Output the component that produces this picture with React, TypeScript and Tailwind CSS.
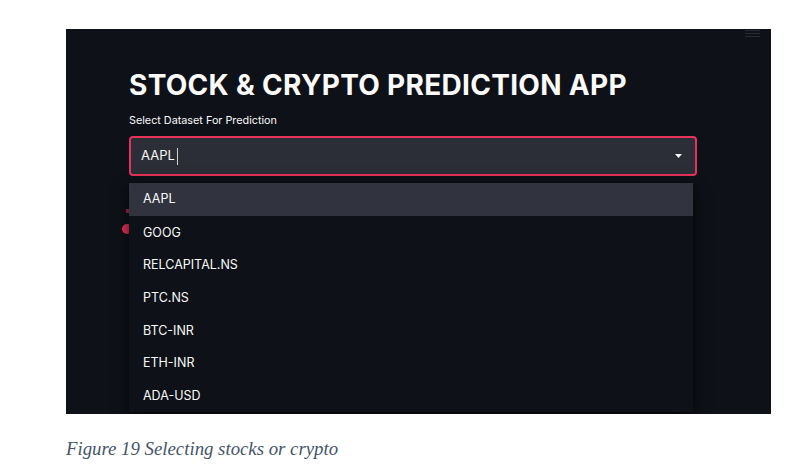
const options = ["AAPL", "GOOG", "RELCAPITAL.NS", "PTC.NS", "BTC-INR", "ETH-INR", "ADA-USD"];

export default function App() {
    return (
        <div className="w-[805px] h-[469px] bg-white overflow-hidden" style={{ fontFamily: "Inter, 'Open Sans', sans-serif" }}>
            <div className="pl-[66px] pt-[29px]">
                <div className="relative w-[705px] h-[385px] bg-[#0e1117] overflow-hidden">
                    {/* hamburger */}
                    <div className="absolute right-[11px] top-[1px] flex flex-col gap-[2px]">
                        <div className="w-[15px] h-[1px] bg-[#2a2c33]" />
                        <div className="w-[15px] h-[1px] bg-[#2a2c33]" />
                        <div className="w-[15px] h-[1px] bg-[#2a2c33]" />
                    </div>

                    <div className="pl-[63px] pr-[74px] pt-[38px] flex flex-col">
                        <h1 className="text-[28px] leading-[36px] font-bold text-[#fafafa] tracking-[0.3px]">
                            STOCK &amp; CRYPTO PREDICTION APP
                        </h1>
                        <div className="mt-[11px] text-[10.8px] leading-[14px] text-[#fafafa]">Select Dataset For Prediction</div>
                        <div className="mt-[8px] h-[40px] rounded-[4px] border-2 border-[#e8315b] bg-[#2b2d37] flex items-center pl-[10px] pr-[10px]">
                            <span className="text-[13px] text-[#fafafa]">AAPL</span>
                            <span className="ml-[2px] w-[1px] h-[17px] bg-[#d0d0d0]" />
                            <div className="flex-1" />
                            <svg width="9" height="6" viewBox="0 0 9 6" className="mr-[2px]">
                                <path d="M1 1 L8 1 L4.5 5 Z" fill="#fafafa" />
                            </svg>
                        </div>

                        {/* content behind the menu */}
                        <div className="relative mt-[7px] h-[240px]">
                            <div className="absolute left-[-3px] top-[26px] w-[3px] h-[4px] bg-[#e8315b] opacity-70" />
                            <div className="absolute left-[-7px] top-[41px] w-[10px] h-[10px] rounded-full bg-[#e8315b]" />

                            <div className="absolute left-0 top-0 w-[564px] bg-[#0e1117] shadow-[0_4px_14px_rgba(0,0,0,0.7)]">
                                {options.map((o, i) => (
                                    <div
                                        key={o}
                                        className={
                                            i === 0
                                                ? "h-[32.7px] flex items-center pl-[14px] pt-[1px] bg-[#31333f] text-[12.5px] text-[#fafafa]"
                                                : "h-[32.7px] flex items-center pl-[14px] pt-[2px] text-[12.5px] text-[#fafafa]"
                                        }
                                    >
                                        {o}
                                    </div>
                                ))}
                            </div>
                        </div>
                    </div>
                </div>
            </div>
            <div
                className="pl-[66px] pt-[23px] text-[18.8px] leading-[24px] italic text-[#44546a]"
                style={{ fontFamily: "'Liberation Serif', serif" }}
            >
                Figure 19 Selecting stocks or crypto
            </div>
        </div>
    );
}
